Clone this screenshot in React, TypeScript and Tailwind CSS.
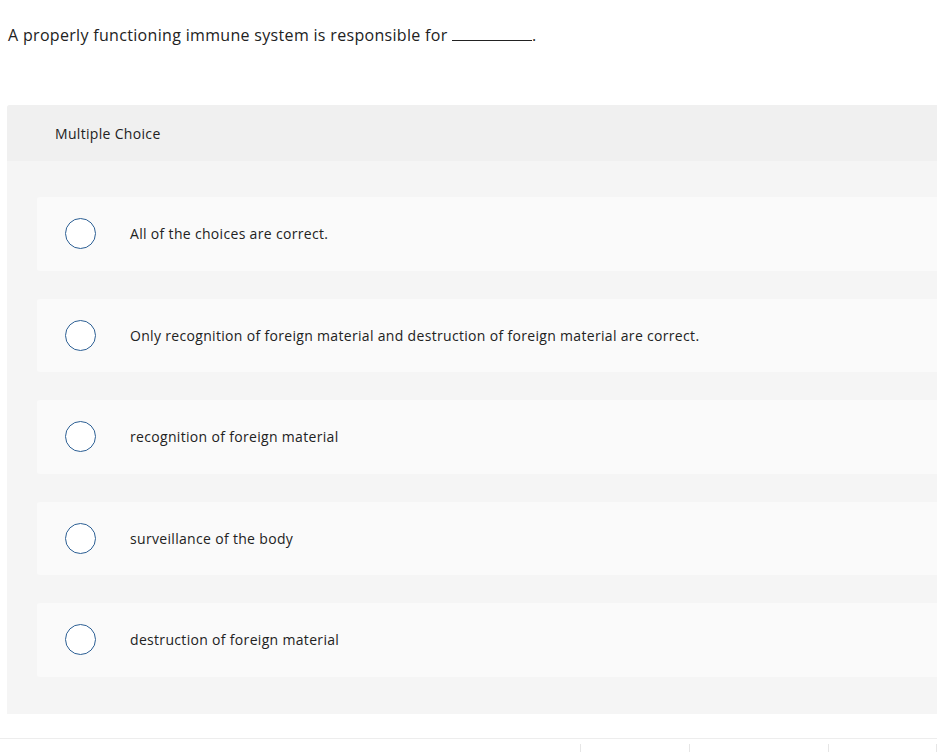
const choices = [
  "All of the choices are correct.",
  "Only recognition of foreign material and destruction of foreign material are correct.",
  "recognition of foreign material",
  "surveillance of the body",
  "destruction of foreign material",
];

function Radio() {
  return (
    <span className="block size-[31px] shrink-0 rounded-full border-[1.5px] border-[#2c5f94] bg-white" aria-hidden="true" />
  );
}

export default function App() {
  return (
    <div className="min-h-[752px] bg-white font-['Open_Sans','Liberation_Sans',sans-serif] tracking-[0.02em] text-[#222]">
      <p className="pl-2 pt-[23px] text-[16px] leading-6">
        A properly functioning immune system is responsible for{" "}
        <span className="inline-block w-[80px] border-b border-[#222]" />.
      </p>

      <section className="ml-[7px] mt-[58px] overflow-hidden rounded-tl-[3px] bg-[#f5f5f5]">
        <header className="flex h-14 items-center bg-[#f0f0f0] pl-12 text-[14px]">Multiple Choice</header>
        <div className="flex flex-col gap-[28px] pb-[37px] pl-[30px] pt-9">
          {choices.map((c) => (
            <label key={c} className="flex h-[73.5px] items-center gap-[34px] rounded-l-[3px] bg-[#fafafa] pl-7 text-[14px]">
              <Radio />
              <span>{c}</span>
            </label>
          ))}
        </div>
      </section>

      <footer className="mt-6 flex h-[15px] border-t border-[#ededed]">
        <div className="w-[580px]" />
        <div className="mt-[5px] w-[109px] border-l border-[#e6e6e6]" />
        <div className="mt-[5px] w-[139px] border-l border-[#e6e6e6]" />
        <div className="mt-[5px] w-[108px] border-l border-[#e6e6e6]" />
        <div className="mt-[5px] flex-1 border-l border-[#e6e6e6]" />
      </footer>
    </div>
  );
}
